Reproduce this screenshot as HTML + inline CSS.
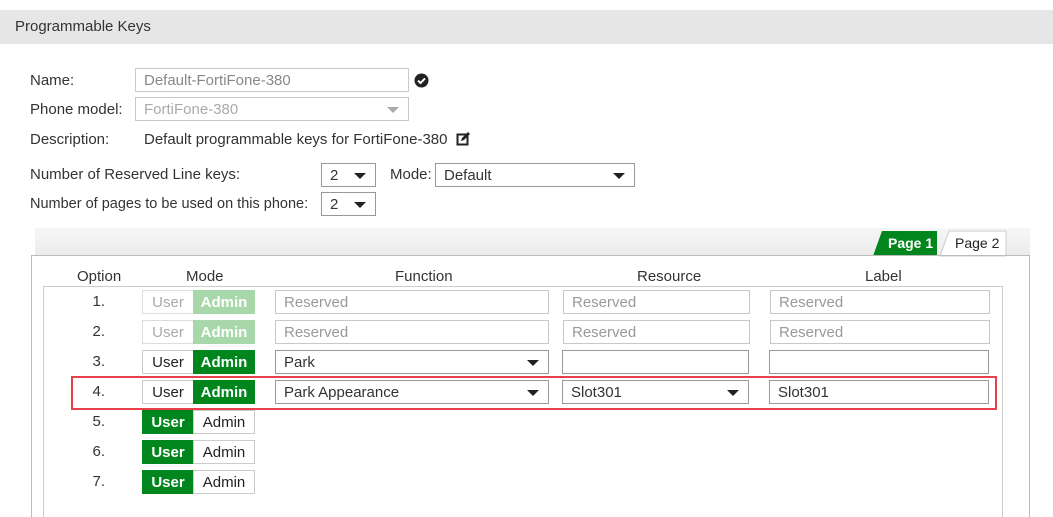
<!DOCTYPE html>
<html style="height:517px;overflow:hidden"><head><style>
*{box-sizing:border-box;margin:0;padding:0}
body{width:1053px;height:517px;background:#fff;font-family:"Liberation Sans",sans-serif;font-size:15px;color:#333;position:relative;overflow:hidden}
.a{position:absolute}
.hdr{left:0;top:10px;width:1053px;height:34px;background:#e6e6e6;padding:8px 15px;font-size:15px;color:#333}
.lbl{font-size:15px;color:#333;line-height:20px}
.in{border:1px solid #c8c8c8;background:#fff;height:24px;line-height:23px;padding-left:8px;font-size:15px;color:#333;white-space:nowrap}
.ro{color:#999}
.sel{border:1px solid #999}
.arr{position:absolute;right:9px;top:9px;width:0;height:0;border-left:6px solid transparent;border-right:6px solid transparent;border-top:6px solid #222}
.arrg{border-top-color:#aaa}
.th{font-size:15px;color:#333;top:268px}
.num{font-size:15px;color:#333;width:30px;text-align:right;left:75px}
.btn{height:24px;line-height:23px;text-align:center;font-size:15px;border:1px solid #ccc;background:#fff;color:#222}
.g{background:#00861d;border-color:#00861d;color:#fff;font-weight:bold}
.lg{background:#a8d8aa;border-color:#a8d8aa;color:#fff;font-weight:bold}
.lu{color:#aaa;border-color:#ddd}
</style></head><body>
<div class="a hdr">Programmable Keys</div>

<div class="a lbl" style="left:30px;top:71px">Name:</div>
<div class="a in ro" style="left:135px;top:68px;width:274px;color:#888">Default-FortiFone-380</div>
<svg class="a" style="left:414px;top:73px" width="15" height="15" viewBox="0 0 15 15"><circle cx="7.5" cy="7.5" r="7" fill="#222"/><path d="M4 7.6l2.5 2.4 4.5-4.6" stroke="#fff" stroke-width="2" fill="none"/></svg>

<div class="a lbl" style="left:30px;top:100px">Phone model:</div>
<div class="a in" style="left:135px;top:97px;width:274px;color:#aaa">FortiFone-380<span class="arr arrg"></span></div>

<div class="a lbl" style="left:30px;top:130px">Description:</div>
<div class="a lbl" style="left:144px;top:130px">Default programmable keys for FortiFone-380</div>
<svg class="a" style="left:456px;top:132px" width="14" height="14" viewBox="0 0 14 14"><rect x="1.5" y="2.5" width="10" height="10" fill="none" stroke="#222" stroke-width="2"/><path d="M5 9l1-3 6-6 2 2-6 6z" fill="#222"/></svg>

<div class="a lbl" style="left:30px;top:165px">Number of Reserved Line keys:</div>
<div class="a in sel" style="left:321px;top:163px;width:55px">2<span class="arr"></span></div>
<div class="a lbl" style="left:390px;top:165px">Mode:</div>
<div class="a in sel" style="left:435px;top:163px;width:200px">Default<span class="arr"></span></div>

<div class="a lbl" style="left:30px;top:194px;font-size:14.5px">Number of pages to be used on this phone:</div>
<div class="a in sel" style="left:321px;top:192px;width:55px">2<span class="arr"></span></div>

<div class="a" style="left:35px;top:228px;width:995px;height:28px;background:linear-gradient(#f6f6f6,#ececec)"></div>
<svg class="a" style="left:870px;top:230px" width="140" height="27"><polygon points="3,26 12,1 67,1 67,26" fill="#00861d"/><polygon points="70,26 79,1 136,1 136,26" fill="#fff" stroke="#ccc"/></svg>
<div class="a" style="left:888px;top:235px;color:#fff;font-weight:bold;font-size:14px">Page 1</div>
<div class="a" style="left:955px;top:235px;color:#222;font-size:14px">Page 2</div>

<div class="a" style="left:31px;top:255px;width:999px;height:262px;border:1px solid #bbb;border-bottom:none"></div>
<div class="a" style="left:43px;top:286px;width:960px;height:231px;border:1px solid #ccc;border-bottom:none"></div>

<div class="a th" style="left:77px">Option</div>
<div class="a th" style="left:186px">Mode</div>
<div class="a th" style="left:395px">Function</div>
<div class="a th" style="left:637px">Resource</div>
<div class="a th" style="left:865px">Label</div>

<div class="a num" style="top:293px">1.</div>
<div class="a btn lu" style="left:142px;top:290px;width:52px">User</div>
<div class="a btn lg" style="left:193px;top:290px;width:62px">Admin</div>
<div class="a in ro" style="left:275px;top:290px;width:274px">Reserved</div>
<div class="a in ro" style="left:563px;top:290px;width:187px">Reserved</div>
<div class="a in ro" style="left:770px;top:290px;width:220px">Reserved</div>

<div class="a num" style="top:323px">2.</div>
<div class="a btn lu" style="left:142px;top:320px;width:52px">User</div>
<div class="a btn lg" style="left:193px;top:320px;width:62px">Admin</div>
<div class="a in ro" style="left:275px;top:320px;width:274px">Reserved</div>
<div class="a in ro" style="left:563px;top:320px;width:187px">Reserved</div>
<div class="a in ro" style="left:770px;top:320px;width:220px">Reserved</div>

<div class="a num" style="top:353px">3.</div>
<div class="a btn" style="left:142px;top:350px;width:52px">User</div>
<div class="a btn g" style="left:193px;top:350px;width:62px">Admin</div>
<div class="a in sel" style="left:275px;top:350px;width:274px">Park<span class="arr"></span></div>
<div class="a in sel" style="left:562px;top:350px;width:187px"></div>
<div class="a in sel" style="left:769px;top:350px;width:220px"></div>

<div class="a" style="left:71px;top:376px;width:926px;height:34px;border:2px solid #e8404a"></div>
<div class="a num" style="top:383px">4.</div>
<div class="a btn" style="left:142px;top:380px;width:52px">User</div>
<div class="a btn g" style="left:193px;top:380px;width:62px">Admin</div>
<div class="a in sel" style="left:275px;top:380px;width:274px">Park Appearance<span class="arr"></span></div>
<div class="a in sel" style="left:562px;top:380px;width:187px">Slot301<span class="arr"></span></div>
<div class="a in sel" style="left:769px;top:380px;width:220px">Slot301</div>

<div class="a num" style="top:413px">5.</div>
<div class="a btn g" style="left:142px;top:410px;width:52px">User</div>
<div class="a btn" style="left:193px;top:410px;width:62px">Admin</div>
<div class="a num" style="top:443px">6.</div>
<div class="a btn g" style="left:142px;top:440px;width:52px">User</div>
<div class="a btn" style="left:193px;top:440px;width:62px">Admin</div>
<div class="a num" style="top:473px">7.</div>
<div class="a btn g" style="left:142px;top:470px;width:52px">User</div>
<div class="a btn" style="left:193px;top:470px;width:62px">Admin</div>
</body></html>
